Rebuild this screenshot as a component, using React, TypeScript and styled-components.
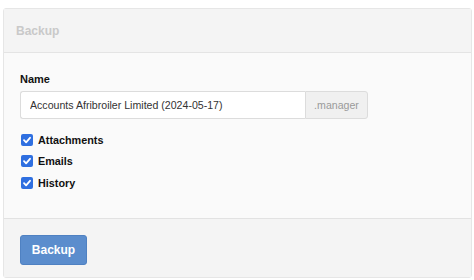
import * as React from "react";
import styled, { createGlobalStyle } from "styled-components";

const GlobalStyle = createGlobalStyle`
  html, body {
    margin: 0;
    padding: 0;
    background: #ffffff;
    font-family: "Liberation Sans", Arial, sans-serif;
  }
`;

const Page = styled.div`
  width: 474px;
  height: 280px;
  padding: 8px 2px 2px 3px;
  box-sizing: border-box;
`;

const Panel = styled.div`
  display: flex;
  flex-direction: column;
  height: 100%;
  border: 1px solid #e6e6e6;
  border-radius: 3px;
  background: #fafafa;
  box-sizing: border-box;
`;

const Header = styled.div`
  height: 44px;
  display: flex;
  align-items: center;
  padding: 0 12px;
  background: #f4f4f4;
  border-bottom: 1px solid #e4e4e4;
  box-sizing: border-box;

  > h2 {
    margin: 0;
    font-size: 12px;
    font-weight: 700;
    color: #c9c9c9;
  }
`;

const Body = styled.div`
  flex: 1;
  padding: 20px 16px 0 16px;
`;

const Label = styled.div`
  font-size: 11px;
  font-weight: 700;
  color: #111;
  margin-bottom: 6px;
`;

const InputGroup = styled.div`
  display: flex;
  width: 348px;
  height: 28px;
  margin-bottom: 10px;
`;

const TextInput = styled.input`
  flex: 1;
  min-width: 0;
  height: 100%;
  box-sizing: border-box;
  border: 1px solid #dcdcdc;
  border-right: none;
  border-radius: 3px 0 0 3px;
  padding: 0 9px;
  font-family: inherit;
  font-size: 10.6px;
  color: #333;
  background: #fff;
  outline: none;
`;

const Addon = styled.span`
  display: flex;
  align-items: center;
  height: 100%;
  width: 63px;
  justify-content: center;
  box-sizing: border-box;
  border: 1px solid #dcdcdc;
  border-radius: 0 3px 3px 0;
  background: #f0f0f0;
  color: #9a9a9a;
  font-size: 10.6px;
`;

const CheckRow = styled.label`
  display: flex;
  align-items: center;
  gap: 5px;
  height: 21.5px;
  font-size: 10.8px;
  font-weight: 700;
  color: #111;
`;

const Box = styled.span`
  display: inline-flex;
  align-items: center;
  justify-content: center;
  width: 12px;
  height: 12px;
  margin-left: 1px;
  border-radius: 2px;
  background: #2f6fe0;
`;

const Footer = styled.div`
  height: 59px;
  display: flex;
  align-items: center;
  padding: 4px 16px 0 16px;
  background: #f4f4f4;
  border-top: 1px solid #e2e2e2;
  box-sizing: border-box;
`;

const Button = styled.button`
  height: 30px;
  width: 67px;
  padding: 0;
  border: 1px solid #4f81c2;
  border-radius: 3px;
  background: #5b8dcd;
  color: #fff;
  font-family: inherit;
  font-size: 12px;
  font-weight: 700;
  cursor: pointer;
`;

const Check: React.FC<{ label: string }> = ({ label }) => (
  <CheckRow>
    <Box>
      <svg width="10" height="10" viewBox="0 0 10 10">
        <path d="M2 5.2 L4.1 7.3 L8 2.8" fill="none" stroke="#fff" strokeWidth="1.8" strokeLinecap="round" strokeLinejoin="round" />
      </svg>
    </Box>
    {label}
  </CheckRow>
);

const App: React.FC = () => {
  const [name, setName] = React.useState("Accounts Afribroiler Limited (2024-05-17)");

  return (
    <>
      <GlobalStyle />
      <Page>
        <Panel>
          <Header>
            <h2>Backup</h2>
          </Header>
          <Body>
            <Label>Name</Label>
            <InputGroup>
              <TextInput value={name} onChange={(e) => setName(e.target.value)} />
              <Addon>.manager</Addon>
            </InputGroup>
            <Check label="Attachments" />
            <Check label="Emails" />
            <Check label="History" />
          </Body>
          <Footer>
            <Button>Backup</Button>
          </Footer>
        </Panel>
      </Page>
    </>
  );
};

export default App;
